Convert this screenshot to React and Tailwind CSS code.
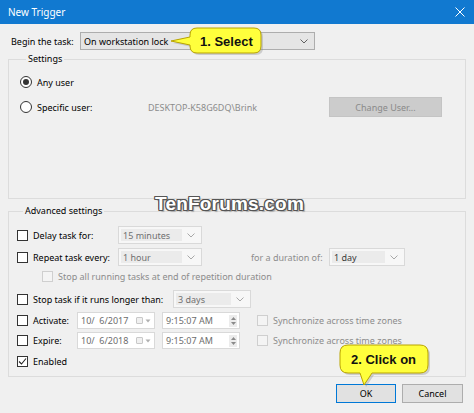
import React from 'react';

const Chevron = ({ color = '#606060' }) => (
  <svg width="8" height="5" viewBox="0 0 8 5" className="shrink-0">
    <polyline points="0.5,0.5 4,4 7.5,0.5" fill="none" stroke={color} strokeWidth="1" />
  </svg>
);

const Checkbox = ({ checked = false, disabled = false }) => (
  <span
    className={`w-[11px] h-[11px] shrink-0 border flex items-center justify-center ${
      disabled ? 'border-[#cfcfcf] bg-[#f4f4f4]' : 'border-[#333333] bg-white'
    }`}
  >
    {checked && (
      <svg width="9" height="9" viewBox="0 0 9 9">
        <polyline points="1,4.5 3.5,7 8,1.5" fill="none" stroke="#222" strokeWidth="1.1" />
      </svg>
    )}
  </span>
);

const Radio = ({ checked = false }) => (
  <span className="w-[12px] h-[12px] shrink-0 rounded-full border border-[#333333] bg-white flex items-center justify-center">
    {checked && <span className="w-[6px] h-[6px] rounded-full bg-[#333333]" />}
  </span>
);

// disabled combo box (Delay / Repeat / Stop task / duration)
const DimCombo = ({ value, width, dark = false }) => (
  <div
    className="h-[18px] border border-[#d9d9d9] bg-[#f7f7f7] flex items-center p-[2px] shrink-0"
    style={{ width }}
  >
    <div className={`h-full flex-1 bg-[#ebebeb] flex items-center pl-[2px] ${dark ? 'text-[#3a3a3a]' : 'text-[#707070]'}`}>
      {value}
    </div>
    <div className="w-[17px] flex items-center justify-center">
      <Chevron color="#a8a8a8" />
    </div>
  </div>
);

const DateBox = ({ value }) => (
  <div className="w-[78px] h-[17px] border border-[#d9d9d9] bg-white flex items-center pl-[3px] pr-[3px] text-[#6d6d6d] shrink-0">
    <span className="flex-1 whitespace-pre">{value}</span>
    <span className="w-[7px] h-[7px] border border-[#c8c8c8] bg-[#f0f0f0] rounded-[1px]" />
    <svg width="6" height="4" viewBox="0 0 6 4" className="ml-[2px]">
      <polygon points="0.5,0.5 5.5,0.5 3,3.5" fill="#b0b0b0" />
    </svg>
  </div>
);

const TimeBox = () => (
  <div className="w-[78px] h-[17px] border border-[#d9d9d9] bg-white flex items-center pl-[3px] pr-[2px] text-[#6d6d6d] shrink-0">
    <span className="flex-1">9:15:07 AM</span>
    <span className="w-[8px] h-[12px] bg-[#ececec] flex flex-col items-center justify-center gap-[2px]">
      <svg width="5" height="3" viewBox="0 0 5 3"><polygon points="0,3 5,3 2.5,0" fill="#8a8a8a" /></svg>
      <svg width="5" height="3" viewBox="0 0 5 3"><polygon points="0,0 5,0 2.5,3" fill="#8a8a8a" /></svg>
    </span>
  </div>
);

const Callout = ({ children, box, path, textClass }) => (
  <div className="absolute pointer-events-none" style={box}>
    <svg width={box.width} height={box.height} className="absolute left-0 top-0">
      <path d={path} fill="#8a8a8a" opacity="0.35" transform="translate(2,2)" />
      <path d={path} fill="#ffff3c" stroke="#b9a400" strokeWidth="1" />
    </svg>
    <div
      className={`absolute font-['Liberation_Sans',Arial,sans-serif] font-bold text-[13px] text-[#111] leading-none ${textClass}`}
    >
      {children}
    </div>
  </div>
);

export default function App() {
  return (
    <div className="relative w-[474px] h-[413px] overflow-hidden bg-[#f0f0f0] font-['Noto_Sans','Segoe_UI',sans-serif] text-[9px] leading-none text-black">
      {/* title bar */}
      <div className="h-[24px] bg-[#1179d0] flex items-center pl-[8px] pr-[9px] text-white text-[10px]">
        <span className="flex-1">New Trigger</span>
        <svg width="10" height="10" viewBox="0 0 10 10">
          <path d="M0.5 0.5 L9.5 9.5 M9.5 0.5 L0.5 9.5" stroke="#fff" strokeWidth="1" />
        </svg>
      </div>

      <div className="px-[8px] pr-[8px]">
        {/* begin the task */}
        <div className="mt-[8px] h-[18px] flex items-center">
          <span className="w-[72px] pl-[3px]">Begin the task:</span>
          <div className="w-[235px] h-[18px] border border-[#adadad] bg-[#e5e5e5] flex items-center pl-[3px] pr-[6px]">
            <span className="flex-1">On workstation lock</span>
            <Chevron />
          </div>
        </div>

        {/* Settings group */}
        <fieldset className="mt-[3px] h-[146px] border border-[#dcdcdc] px-[11px]">
          <legend className="ml-[6px] px-[2px] leading-[12px]">Settings</legend>
          <div className="mt-[9px] h-[16px] flex items-center">
            <Radio checked />
            <span className="ml-[5px]">Any user</span>
          </div>
          <div className="mt-[7px] h-[20px] flex items-center">
            <Radio />
            <span className="ml-[5px] w-[111px]">Specific user:</span>
            <span className="w-[181px] text-[#8c8c8c]">DESKTOP-K58G6DQ\Brink</span>
            <div className="w-[113px] h-[20px] bg-[#cccccc] border border-[#c4c4c4] flex items-center justify-center text-[#8a8a8a]">
              Change User...
            </div>
          </div>
        </fieldset>

        {/* Advanced settings group */}
        <fieldset className="mt-[6px] h-[172px] border border-[#dcdcdc] pl-[8px]">
          <legend className="ml-[6px] px-[2px] leading-[12px]">Advanced settings</legend>

          <div className="mt-[9px] h-[18px] flex items-center">
            <Checkbox />
            <span className="ml-[5px] w-[85px]">Delay task for:</span>
            <DimCombo value="15 minutes" width={84} />
          </div>

          <div className="mt-[4px] h-[18px] flex items-center">
            <Checkbox />
            <span className="ml-[5px] w-[85px]">Repeat task every:</span>
            <DimCombo value="1 hour" width={84} />
            <span className="ml-[49px] w-[78px] text-[#8c8c8c]">for a duration of:</span>
            <DimCombo value="1 day" width={76} dark />
          </div>

          <div className="mt-[2px] h-[16px] flex items-center pl-[25px]">
            <Checkbox disabled />
            <span className="ml-[5px] text-[#8c8c8c]">Stop all running tasks at end of repetition duration</span>
          </div>

          <div className="mt-[6px] h-[18px] flex items-center">
            <Checkbox />
            <span className="ml-[5px] w-[140px]">Stop task if it runs longer than:</span>
            <DimCombo value="3 days" width={78} />
          </div>

          <div className="mt-[4px] h-[17px] flex items-center">
            <Checkbox />
            <span className="ml-[5px] w-[44px]">Activate:</span>
            <DateBox value="10/  6/2017" />
            <span className="ml-[7px]"><TimeBox /></span>
            <span className="ml-[17px]"><Checkbox disabled /></span>
            <span className="ml-[5px] text-[#8c8c8c]">Synchronize across time zones</span>
          </div>

          <div className="mt-[3px] h-[17px] flex items-center">
            <Checkbox />
            <span className="ml-[5px] w-[44px]">Expire:</span>
            <DateBox value="10/  6/2018" />
            <span className="ml-[7px]"><TimeBox /></span>
            <span className="ml-[17px]"><Checkbox disabled /></span>
            <span className="ml-[5px] text-[#8c8c8c]">Synchronize across time zones</span>
          </div>

          <div className="mt-[4px] h-[16px] flex items-center">
            <Checkbox checked />
            <span className="ml-[5px]">Enabled</span>
          </div>
        </fieldset>

        {/* buttons */}
        <div className="mt-[7px] flex justify-end gap-[6px] pr-[3px]">
          <div className="w-[60px] h-[19px] bg-[#e1e1e1] border border-[#0078d7] flex items-center justify-center">OK</div>
          <div className="w-[61px] h-[19px] bg-[#e1e1e1] border border-[#adadad] flex items-center justify-center">Cancel</div>
        </div>
      </div>

      {/* watermark */}
      <div className="absolute left-[155px] top-[194px] font-['Liberation_Sans',Arial,sans-serif] font-bold text-[19px] leading-none text-white tracking-[0.2px] [text-shadow:-1px_0_0_#555,1px_0_0_#555,0_-1px_0_#555,0_1px_0_#555,1px_1px_0_#555,-1px_-1px_0_#555,1px_-1px_0_#555,-1px_1px_0_#555,2px_2px_1px_#aaa]">
        TenForums.com
      </div>

      {/* callout 1 */}
      <Callout
        box={{ left: 168, top: 26, width: 98, height: 32 }}
        path="M29 2 H86 Q93 2 93 9 V20 Q93 27 86 27 H29 Q22 27 22 20 V19 L3 15 L22 11 V9 Q22 2 29 2 Z"
        textClass="left-[32px] top-[9px]"
      >
        1. Select
      </Callout>

      {/* callout 2 */}
      <Callout
        box={{ left: 336, top: 342, width: 98, height: 46 }}
        path="M12 3 H84 Q92 3 92 11 V23 Q92 31 84 31 H36 L28 43 L24 31 H12 Q4 31 4 23 V11 Q4 3 12 3 Z"
        textClass="left-[15px] top-[11px]"
      >
        2. Click on
      </Callout>
    </div>
  );
}
